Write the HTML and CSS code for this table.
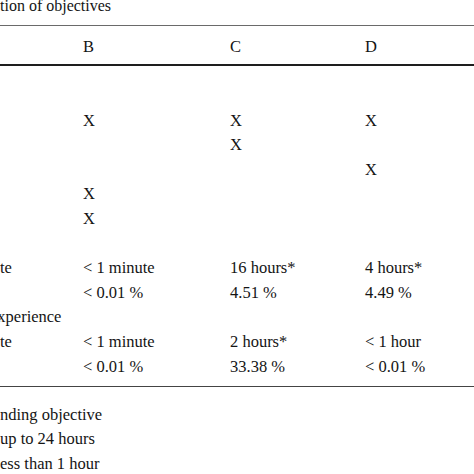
FILE: index.html
```html
<!DOCTYPE html>
<html>
<head>
<meta charset="utf-8">
<link rel="stylesheet" href="styles.css">
</head>
<body>
<div class="page">
  <div class="caption">tion of objectives</div>
  <div class="head row">
    <div class="c0"></div><div>B</div><div>C</div><div>D</div>
  </div>
  <div class="body">
    <div class="row"><div class="c0"></div><div></div><div></div><div></div></div>
    <div class="row"><div class="c0"></div><div>X</div><div>X</div><div>X</div></div>
    <div class="row"><div class="c0"></div><div></div><div>X</div><div></div></div>
    <div class="row"><div class="c0"></div><div></div><div></div><div>X</div></div>
    <div class="row"><div class="c0"></div><div>X</div><div></div><div></div></div>
    <div class="row"><div class="c0"></div><div>X</div><div></div><div></div></div>
    <div class="row"><div class="c0"></div><div></div><div></div><div></div></div>
    <div class="row"><div class="c0">te</div><div>&lt; 1 minute</div><div>16 hours*</div><div>4 hours*</div></div>
    <div class="row"><div class="c0"></div><div>&lt; 0.01 %</div><div>4.51 %</div><div>4.49 %</div></div>
    <div class="row"><div class="c0 cut">experience</div><div></div><div></div><div></div></div>
    <div class="row"><div class="c0">te</div><div>&lt; 1 minute</div><div>2 hours*</div><div>&lt; 1 hour</div></div>
    <div class="row"><div class="c0"></div><div>&lt; 0.01 %</div><div>33.38 %</div><div>&lt; 0.01 %</div></div>
  </div>
  <div class="notes">
    <div class="note">nding objective</div>
    <div class="note">up to 24 hours</div>
    <div class="note">ess than 1 hour</div>
  </div>
</div>
</body>
</html>
```

FILE: styles.css
```css
html, body {
  margin: 0;
  padding: 0;
  background: #ffffff;
}
body {
  font-family: "Liberation Serif", "Times New Roman", serif;
  font-size: 16.5px;
  color: #141414;
  overflow: hidden;
}
.page {
  width: 474px;
}
.caption {
  font-size: 16px;
  line-height: 20px;
  margin: -4px 0 9px;
  white-space: nowrap;
}
.row {
  display: grid;
  grid-template-columns: 83px 147px 135px 1fr;
  line-height: 24.6px;
  min-height: 24.6px;
  white-space: nowrap;
}
.head {
  line-height: 20px;
  min-height: 20px;
  padding: 11px 0 7px;
  border-top: 1px solid #6a6a6a;
  border-bottom: 2px solid #1e1e1e;
}
.body {
  padding: 18px 0 7px;
  border-bottom: 1.5px solid #444;
}
.cut {
  text-indent: -10px;
}
.notes {
  padding-top: 15.5px;
}
.note {
  line-height: 24.5px;
  white-space: nowrap;
}
```
